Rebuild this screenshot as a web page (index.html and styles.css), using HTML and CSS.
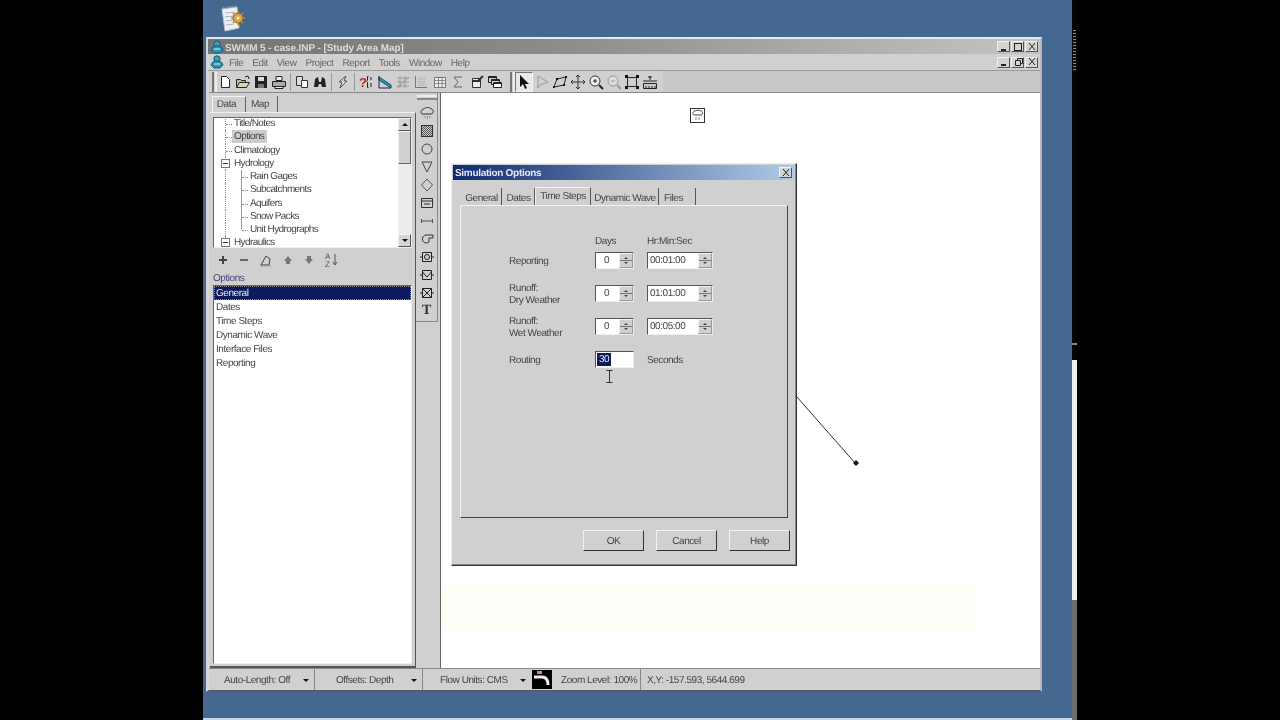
FILE: index.html
```html
<!DOCTYPE html>
<html lang="en">
<head>
    <meta charset="UTF-8" />
    <title>SWMM 5 - case.INP - [Study Area Map]</title>
    <link rel="stylesheet" href="styles.css">
</head>
<body>
    <svg class="defs" width="0" height="0">
        <symbol id="swmm" viewBox="0 0 14 14">
            <circle cx="7" cy="4" r="3.2" fill="#3f9fb5" stroke="#125a78"/>
            <path d="M1 10c1-3 3-4 6-4s5 1 6 4l-3 3H4z" fill="#2f93ad" stroke="#125a78"/>
            <path d="M4 9h6" stroke="#cfeef5"/>
        </symbol>
        <symbol id="cloud" viewBox="0 0 16 16">
            <path d="M3 9C1 8 2 4 5 4c1-2 6-2 7 0 3 0 3 5 0 5z" fill="none" stroke="#333"/>
            <path d="M6 11v2M8.500 11v3M11 11v2" stroke="#888"/>
        </symbol>
    </svg>

    <div class="desktop">
        <svg class="desk-icon" width="26" height="28" viewBox="0 0 26 28">
            <path d="M2 4l15-2 2 21-14 3z" fill="#eef0f4" stroke="#b9c2cf"/>
            <path d="M5 8l10-1M5 12l9-1M6 16l8-1M6 20l8-1" stroke="#aab4c4"/>
            <path d="M3 3l14-2" stroke="#8b96a8" stroke-width="2" stroke-dasharray="1 1"/>
            <circle cx="18" cy="13" r="5" fill="#d9a441" stroke="#7d6230"/>
            <circle cx="18" cy="13" r="1.500" fill="#fff3c8"/>
            <path d="M18 6v3M18 17v3M11 13h3M22 13h3M13 8l2 2M21 16l2 2M23 8l-2 2M15 16l-2 2" stroke="#b98a35" stroke-width="1.500"/>
        </svg>

        <div class="window">
            <div class="titlebar">
                <svg class="app-icon" width="14" height="14"><use href="#swmm"/></svg>
                <span class="title-text">SWMM 5 - case.INP - [Study Area Map]</span>
                <div class="caption-btns">
                    <span class="cap-btn"><svg width="12" height="10"><path d="M3 8h5" stroke="#222" stroke-width="2"/></svg></span>
                    <span class="cap-btn"><svg width="12" height="10"><rect x="2.500" y="1.500" width="7" height="7" fill="none" stroke="#222"/></svg></span>
                    <span class="cap-btn"><svg width="12" height="10"><path d="M3 1l6 7M9 1L3 8" stroke="#222"/></svg></span>
                </div>
            </div>

            <div class="menubar">
                <svg class="app-icon" width="14" height="14"><use href="#swmm"/></svg>
                <div class="menu-items">
                    <span>File</span><span>Edit</span><span>View</span><span>Project</span>
                    <span>Report</span><span>Tools</span><span>Window</span><span>Help</span>
                </div>
                <div class="caption-btns">
                    <span class="cap-btn"><svg width="12" height="10"><path d="M3 8h5" stroke="#222" stroke-width="2"/></svg></span>
                    <span class="cap-btn"><svg width="12" height="10"><path d="M3.500 3.500h5v5h-5zM5.500 3V1.500h5v5H9" fill="none" stroke="#222"/></svg></span>
                    <span class="cap-btn"><svg width="12" height="10"><path d="M3 1l6 7M9 1L3 8" stroke="#222"/></svg></span>
                </div>
            </div>

            <div class="toolbar">
                <span class="grip"></span>
                <div class="tool-group first">
                    <span class="tool"><svg width="16" height="16"><path d="M4.500 2.500h5l3 3v8h-8z" fill="#fff" stroke="#222"/></svg></span>
                    <span class="tool"><svg width="16" height="16"><path d="M1.500 13.500v-8h4l1 1h4v2" fill="#bdbd9c" stroke="#222"/><path d="M1.500 13.500l3-5h10l-3 5z" fill="#d8d8b0" stroke="#222"/><path d="M10 3l3-1 1 3" fill="none" stroke="#222"/></svg></span>
                    <span class="tool"><svg width="16" height="16"><path d="M2 2h12v12H2z" fill="#222"/><path d="M5 3h6v4H5z" fill="#ddd"/><path d="M5 10h6v4H5z" fill="#777"/></svg></span>
                    <span class="tool"><svg width="16" height="16"><path d="M5 2.500h6v4H5z" fill="#eee" stroke="#222"/><path d="M1.500 7.500h13v5h-13z" fill="#aaa" stroke="#222"/><path d="M4 12.500h8v2H4z" fill="#eee" stroke="#222"/></svg></span>
                </div>
                <span class="tool-sep"></span>
                <div class="tool-group">
                    <span class="tool"><svg width="16" height="16"><path d="M2.500 2.500h6v9h-6z" fill="#ddd" stroke="#333"/><path d="M7.500 6.500h6v7h-6z" fill="#fff" stroke="#333"/></svg></span>
                    <span class="tool"><svg width="16" height="16"><path d="M2 13l1-8 3-2 1 5 2 0 1-5 3 2 1 8h-4l-1-3h-2l-1 3z" fill="#222"/></svg></span>
                </div>
                <span class="tool-sep"></span>
                <div class="tool-group">
                    <span class="tool"><svg width="16" height="16"><path d="M11 2L4 8h3l-2 6 7-7H9l2-5z" fill="#ddd" stroke="#555"/></svg></span>
                </div>
                <span class="tool-sep"></span>
                <div class="tool-group wide">
                    <span class="tool"><svg width="16" height="16"><text x="1" y="13" class="svg-q">?</text><path d="M10.500 2.500h-1v4l-1 1 1 1v5h1M13 3v3M13 9v4" fill="none" stroke="#222"/></svg></span>
                    <span class="tool"><svg width="16" height="16"><path d="M2 3l12 8v3L2 6z" fill="#2e9aa8" stroke="#0d4d78"/><path d="M2 2v12h12" fill="none" stroke="#224"/></svg></span>
                    <span class="tool"><svg width="16" height="16"><path d="M2 4h12M2 8h12M2 12h12M5 2v12M10 2v12M2 14l12-11" stroke="#999" fill="none"/></svg></span>
                    <span class="tool"><svg width="16" height="16"><path d="M2.500 2v11.500H14" stroke="#777" fill="none"/><path d="M5 5h7M5 8h7M5 11h7M7 3v9M10 3v9" stroke="#aaa" stroke-dasharray="1 1"/></svg></span>
                    <span class="tool"><svg width="16" height="16"><path d="M2.500 3.500h11v10h-11z" fill="#eee" stroke="#777"/><path d="M2.500 6.500h11M2.500 9.500h11M6.500 4v9M10 4v9" stroke="#888"/></svg></span>
                    <span class="tool"><svg width="16" height="16"><path d="M12 3H4l4 5-4 5h8" fill="none" stroke="#666"/></svg></span>
                    <span class="tool"><svg width="16" height="16"><path d="M3.500 4.500h8v9h-8z" fill="#eee" stroke="#333"/><path d="M3.500 7h8" stroke="#333" stroke-width="2"/><path d="M9 7l5-5" stroke="#333" stroke-width="2"/></svg></span>
                    <span class="tool"><svg width="16" height="16"><path d="M1.500 2.500h8v6h-8z" fill="#ccc" stroke="#222"/><path d="M4.500 5.500h8v5h-8z" fill="#ddd" stroke="#222"/><path d="M6.500 8.500h8v5h-8z" fill="#fff" stroke="#222"/><path d="M1.500 3.500h8M4.500 6.500h8M6.500 9.500h8" stroke="#222"/></svg></span>
                </div>
                <span class="tool-end"></span>
                <span class="grip"></span>
                <div class="tool-group">
                    <span class="tool pressed"><svg width="16" height="16"><path d="M4 1v12l3-3 2 5 2-1-2-4h4z" fill="#111"/></svg></span>
                    <span class="tool"><svg width="16" height="16"><path d="M4 2v12l2-3 8-3z" fill="none" stroke="#999"/></svg></span>
                    <span class="tool"><svg width="16" height="16"><path d="M2 13l3-8 9-2-2 8z" fill="none" stroke="#222"/><path d="M1 12h2v2H1zM4 4h2v2H4zM13 2h2v2h-2zM11 10h2v2h-2z" fill="#111"/></svg></span>
                    <span class="tool"><svg width="16" height="16"><path d="M8 1v14M1 8h14M6 3l2-2 2 2M6 13l2 2 2-2M3 6L1 8l2 2M13 6l2 2-2 2" fill="none" stroke="#333"/></svg></span>
                    <span class="tool"><svg width="16" height="16"><circle cx="7" cy="7" r="5" fill="#eee" stroke="#333"/><path d="M11 11l4 4" stroke="#222" stroke-width="2"/><path d="M5 7h4M7 5v4" stroke="#222"/></svg></span>
                    <span class="tool"><svg width="16" height="16"><circle cx="7" cy="7" r="5" fill="#ddd" stroke="#999"/><path d="M11 11l4 4" stroke="#999" stroke-width="2"/><path d="M5 7h4" stroke="#999"/></svg></span>
                    <span class="tool"><svg width="16" height="16"><path d="M3.500 3.500h9v9h-9z" fill="none" stroke="#222"/><path d="M1 1h3v3H1zM12 1h3v3h-3zM1 12h3v3H1zM12 12h3v3h-3z" fill="#111"/></svg></span>
                    <span class="tool"><svg width="16" height="16"><path d="M1.500 9.500h13v5h-13z" fill="#ccc" stroke="#222"/><path d="M4 12v2M7 12v2M10 12v2M13 12v2" stroke="#222"/><path d="M1 7h14M8 2v4M6 3h4" stroke="#222"/></svg></span>
                </div>
            </div>

            <div class="main">
                <div class="side-panel">
                    <div class="side-tabs">
                        <span class="side-tab active">Data</span>
                        <span class="side-tab">Map</span>
                    </div>
                    <div class="side-body">
                        <div class="tree">
                            <div class="tree-rows">
                                <div class="node lvl1">Title/Notes</div>
                                <div class="node lvl1"><span class="picked">Options</span></div>
                                <div class="node lvl1">Climatology</div>
                                <div class="node lvl1 open">Hydrology</div>
                                <div class="node lvl2">Rain Gages</div>
                                <div class="node lvl2">Subcatchments</div>
                                <div class="node lvl2">Aquifers</div>
                                <div class="node lvl2">Snow Packs</div>
                                <div class="node lvl2 last">Unit Hydrographs</div>
                                <div class="node lvl1 open">Hydraulics</div>
                            </div>
                            <div class="scrollbar">
                                <span class="sb-btn"><i class="tri-up"></i></span>
                                <span class="sb-thumb"></span>
                                <span class="sb-track"></span>
                                <span class="sb-btn"><i class="tri-down"></i></span>
                            </div>
                        </div>

                        <div class="item-tools">
                            <svg width="12" height="12"><path d="M6 2v8M2 6h8" stroke="#444" stroke-width="2"/></svg>
                            <svg width="12" height="12"><path d="M2 6h8" stroke="#666" stroke-width="2"/></svg>
                            <svg width="14" height="14"><path d="M2 12l5-9 4 3-1 6z" fill="none" stroke="#444"/><path d="M1 13h12" stroke="#888" stroke-dasharray="1 1"/></svg>
                            <svg width="12" height="12"><path d="M6 2l4 5H8v3H4V7H2z" fill="#777"/></svg>
                            <svg width="12" height="12"><path d="M6 10l4-5H8V2H4v3H2z" fill="#777"/></svg>
                            <svg width="16" height="16"><text x="1" y="7" class="svg-sort">A</text><text x="1" y="15" class="svg-sort">Z</text><path d="M11 2v10M9 10l2 3 2-3" fill="none" stroke="#555"/></svg>
                        </div>

                        <div class="list-label">Options</div>
                        <div class="item-list">
                            <div class="list-item selected">General</div>
                            <div class="list-item">Dates</div>
                            <div class="list-item">Time Steps</div>
                            <div class="list-item">Dynamic Wave</div>
                            <div class="list-item">Interface Files</div>
                            <div class="list-item">Reporting</div>
                        </div>
                    </div>
                </div>

                <div class="object-bar">
                    <div class="object-tools">
                        <span class="obar-grip"></span>
                        <svg width="16" height="18"><use href="#cloud"/></svg>
                        <svg width="16" height="18"><defs><pattern id="hatch" width="2" height="2" patternUnits="userSpaceOnUse"><path d="M0 2L2 0" stroke="#333" stroke-width="0.800"/></pattern></defs><rect x="2.500" y="3.500" width="11" height="11" fill="url(#hatch)" stroke="#333"/></svg>
                        <svg width="16" height="18"><circle cx="8" cy="9" r="5" fill="none" stroke="#444"/></svg>
                        <svg width="16" height="18"><path d="M3 4h10l-5 10z" fill="none" stroke="#444"/></svg>
                        <svg width="16" height="18"><path d="M8 3l5.500 6L8 15 2.500 9z" fill="none" stroke="#555"/></svg>
                        <svg width="16" height="18"><path d="M2.500 4.500h11v9h-11zM2 7h12M5 10h6" fill="none" stroke="#333"/></svg>
                        <svg width="16" height="18"><path d="M2.500 7v4M13.500 7v4M2.500 9h11" stroke="#555"/></svg>
                        <svg width="16" height="18"><path d="M14 5H7a4 4 0 1 0 3 7V8h4z" fill="none" stroke="#333"/></svg>
                        <svg width="16" height="18"><path d="M3.500 4.500h9v9h-9zM1 9h2M13 9h2" fill="none" stroke="#222"/><circle cx="8" cy="9" r="2.500" fill="none" stroke="#222"/></svg>
                        <svg width="16" height="18"><path d="M3.500 4.500h9v9h-9zM1 9h2M13 9h2M3.500 6L8 11l4.500-5" fill="none" stroke="#222"/></svg>
                        <svg width="16" height="18"><path d="M3.500 4.500h9v9h-9zM1 9h2M13 9h2M3.500 4.500l9 9M12.500 4.500l-9 9" fill="none" stroke="#222"/></svg>
                        <span class="text-tool">T</span>
                    </div>
                </div>

                <div class="map">
                    <svg class="gage" width="15" height="15"><rect x="0.500" y="0.500" width="14" height="14" fill="#fff" stroke="#333"/><path d="M4 7C2 6 3 3 5 3c1-1 5-1 6 0 2 0 2 4 0 4z" fill="none" stroke="#444"/><path d="M6 9v3M9 9v3" stroke="#888"/></svg>
                    <svg class="link" width="64" height="72"><path d="M1 1l58 66" stroke="#333" fill="none"/><path d="M60 64l3 3-3 3-3-3z" fill="#111"/></svg>
                    <span class="artifact"></span>
                </div>
            </div>

            <div class="statusbar">
                <div class="seg seg-auto">Auto-Length: Off<i class="tri-down"></i></div>
                <div class="seg seg-offs">Offsets: Depth<i class="tri-down"></i></div>
                <div class="seg seg-flow">Flow Units: CMS<i class="tri-down"></i></div>
                <div class="run-state"><svg width="19" height="19"><path d="M2 7h8q6 0 6 8" fill="none" stroke="#eee" stroke-width="3"/><path d="M5 1h5v3H5z" fill="#c88"/></svg></div>
                <div class="seg seg-zoom">Zoom Level: 100%</div>
                <div class="seg seg-xy">X,Y: -157.593, 5644.699</div>
            </div>
        </div>

        <div class="dialog">
            <div class="dlg-title">
                <span class="dlg-title-text">Simulation Options</span>
                <span class="cap-btn"><svg width="12" height="10"><path d="M3 1l6 7M9 1L3 8" stroke="#222"/></svg></span>
            </div>
            <div class="dlg-tabs">
                <span class="dlg-tab t-general">General</span>
                <span class="dlg-tab t-dates">Dates</span>
                <span class="dlg-tab t-steps active">Time Steps</span>
                <span class="dlg-tab t-wave">Dynamic Wave</span>
                <span class="dlg-tab t-files">Files</span>
            </div>
            <div class="dlg-panel">
                <div class="step-head">
                    <span>Days</span>
                    <span>Hr:Min:Sec</span>
                </div>
                <div class="step-grid">
                    <span class="row-label">Reporting</span>
                    <div class="spin-box days"><span class="spin-text">0</span><span class="spin"><i class="tri-up"></i><i class="tri-down"></i></span></div>
                    <div class="spin-box time"><span class="spin-text">00:01:00</span><span class="spin"><i class="tri-up"></i><i class="tri-down"></i></span></div>

                    <span class="row-label">Runoff:<br>Dry Weather</span>
                    <div class="spin-box days"><span class="spin-text">0</span><span class="spin"><i class="tri-up"></i><i class="tri-down"></i></span></div>
                    <div class="spin-box time"><span class="spin-text">01:01:00</span><span class="spin"><i class="tri-up"></i><i class="tri-down"></i></span></div>

                    <span class="row-label">Runoff:<br>Wet Weather</span>
                    <div class="spin-box days"><span class="spin-text">0</span><span class="spin"><i class="tri-up"></i><i class="tri-down"></i></span></div>
                    <div class="spin-box time"><span class="spin-text">00:05:00</span><span class="spin"><i class="tri-up"></i><i class="tri-down"></i></span></div>

                    <span class="row-label">Routing</span>
                    <div class="spin-box routing"><span class="sel-text">30</span></div>
                    <span class="row-label">Seconds</span>
                </div>
                <svg class="ibeam" width="7" height="13"><path d="M0.500 0.500h6M3.500 0.500v12M0.500 12.500h6" stroke="#333" fill="none"/></svg>
            </div>
            <div class="dlg-buttons">
                <span class="dlg-btn">OK</span>
                <span class="dlg-btn">Cancel</span>
                <span class="dlg-btn">Help</span>
            </div>
        </div>
    </div>

    <div class="edge-strip">
        <span class="edge-dark"></span>
        <span class="edge-light"></span>
        <span class="edge-gray"></span>
    </div>
</body>
</html>
```

FILE: styles.css
```css
body {
    margin: 0;
    width: 1280px;
    height: 720px;
    overflow: hidden;
    background-color: #000;
    display: flex;
    padding-left: 203px;
    box-sizing: border-box;
    font-family: "Liberation Sans", Arial, sans-serif;
    font-size: 10px;
    letter-spacing: -0.45px;
    white-space: nowrap;
    text-rendering: geometricPrecision;
    color: #444;
}

.defs {
    position: absolute;
}

.desktop {
    position: relative;
    width: 869px;
    height: 718px;
    background-color: #456890;
    border-bottom: 2px solid #c9d3de;
    filter: blur(0.4px);
}

.desk-icon {
    position: absolute;
    left: 17px;
    top: 5px;
}

.edge-strip {
    width: 5px;
    height: 720px;
    display: flex;
    flex-direction: column;
}

.edge-dark {
    height: 360px;
    background:
        repeating-linear-gradient(#8a8a70 0 1px, #111 1px 3px) 1px 30px / 3px 42px no-repeat,
        linear-gradient(#888, #888) 0 343px / 5px 2px no-repeat,
        #050505;
}

.edge-light {
    height: 240px;
    background-color: #eeeeee;
}

.edge-gray {
    height: 120px;
    background-color: #6e6e6e;
}

/* main window */
.window {
    position: absolute;
    left: 3px;
    top: 37px;
    width: 836px;
    height: 655px;
    box-sizing: border-box;
    display: flex;
    flex-direction: column;
    background-color: #d0d0d0;
    border-top: 2px solid #e6e9ec;
    border-left: 3px solid #d8d8d8;
    border-right: 2px solid #b8b8bc;
    border-bottom: 2px solid #555a66;
}

.titlebar {
    height: 15px;
    display: flex;
    align-items: center;
    background: linear-gradient(to right, #757575, #8a8a8a 40%, #a8a8a8 70%, #c4c4c4);
    margin-left: -1px;
}

.app-icon {
    margin-left: 2px;
    flex: none;
}

.title-text {
    margin-left: 1px;
    padding-top: 3px;
    font-weight: bold;
    font-size: 10px;
    letter-spacing: -0.1px;
    color: #dcdcdc;
}

.caption-btns {
    margin-left: auto;
    display: flex;
    gap: 1px;
    margin-right: 2px;
}

.cap-btn {
    width: 13px;
    height: 11px;
    box-sizing: border-box;
    display: flex;
    align-items: center;
    justify-content: center;
    background-color: #d4d4d4;
    border: 1px solid;
    border-color: #f2f2f2 #555 #555 #f2f2f2;
}

.menubar {
    height: 17px;
    display: flex;
    align-items: center;
    border-bottom: 1px solid #999;
    box-sizing: border-box;
    margin-left: -1px;
}

.menu-items {
    display: flex;
    gap: 9px;
    margin-left: 5px;
    padding-top: 2px;
    color: #666;
}

.toolbar {
    height: 22px;
    display: flex;
    align-items: center;
    box-sizing: border-box;
    border-bottom: 1px solid #888;
    padding-left: 3px;
    background: linear-gradient(to right, #d0d0d0 454px, #c8c8c8 454px);
}

.grip {
    width: 5px;
    height: 20px;
    flex: none;
    box-sizing: border-box;
    border-left: 2px solid #777;
    border-right: 2px solid #eee;
}

.tool-group {
    display: flex;
}

.tool-group.first {
    margin-left: -1px;
}

.tool-group.wide .tool {
    width: 18.4px;
}

.tool {
    width: 18px;
    height: 20px;
    display: flex;
    align-items: center;
    justify-content: center;
    box-sizing: border-box;
}

.tool.pressed {
    background-color: #e8e8e8;
    border: 1px solid;
    border-color: #777 #f4f4f4 #f4f4f4 #777;
}

.tool-sep {
    width: 1px;
    height: 18px;
    margin: 0 2px;
    background-color: #999;
    flex: none;
}

.tool-end {
    width: 6px;
    flex: none;
}

.svg-q {
    font: bold 13px "Liberation Sans", sans-serif;
    fill: #c22;
}

.svg-sort {
    font: 8px "Liberation Sans", sans-serif;
    fill: #555;
}

.main {
    flex: 1;
    display: flex;
    min-height: 0;
}

/* left browser panel */
.side-panel {
    width: 207px;
    box-sizing: border-box;
    padding-top: 3px;
    display: flex;
    flex-direction: column;
    flex: none;
}

.side-tabs {
    height: 16px;
    display: flex;
    padding-left: 3px;
}

.side-tab {
    width: 32px;
    padding-right: 3px;
    text-align: center;
    line-height: 18px;
    border-right: 1px solid #666;
    box-sizing: border-box;
}

.side-tab.active {
    width: 34px;
    padding-right: 5px;
    border-top: 1px solid #f4f4f4;
    border-left: 1px solid #f4f4f4;
    line-height: 15px;
}

.side-body {
    flex: 1;
    min-height: 0;
    padding: 4px 3px 2px 3px;
    margin-left: 1px;
    border-top: 1px solid #f0f0f0;
    border-right: 1px solid #555;
    border-bottom: 2px solid #555;
    display: flex;
    flex-direction: column;
}

.tree {
    height: 131px;
    flex: none;
    box-sizing: border-box;
    display: flex;
    overflow: hidden;
    background-color: #fff;
    border: 1px solid;
    border-color: #666 #eee #eee #666;
}

.tree-rows {
    flex: 1;
    margin-top: -1px;
    letter-spacing: -0.6px;
}

.node {
    position: relative;
    height: 13.25px;
    line-height: 13px;
}

.lvl1 {
    padding-left: 20px;
}

.lvl2 {
    padding-left: 36px;
    background: linear-gradient(#999, #999) 27px 0 / 1px 100% no-repeat;
}

.lvl2.last {
    background-size: 1px 50%;
}

.node::before {
    content: "";
    position: absolute;
    left: 11px;
    top: 0;
    bottom: 0;
    border-left: 1px dotted #888;
}

.lvl1::after {
    content: "";
    position: absolute;
    left: 12px;
    top: 7px;
    width: 6px;
    border-top: 1px dotted #888;
}

.lvl2::after {
    content: "";
    position: absolute;
    left: 28px;
    top: 7px;
    width: 6px;
    height: 0;
    border-top: 1px dotted #888;
}

.open::after {
    left: 7px;
    top: 2px;
    width: 7px;
    height: 7px;
    border: 1px solid #777;
    background: linear-gradient(#333, #333) center / 5px 1px no-repeat #fff;
}

.picked {
    display: inline-block;
    padding: 0 2px;
    margin-left: -2px;
    width: 35px;
    box-sizing: border-box;
    background-color: #cccccc;
}

.scrollbar {
    width: 13px;
    flex: none;
    display: flex;
    flex-direction: column;
    background-color: #ececec;
}

.sb-btn {
    height: 13px;
    box-sizing: border-box;
    display: flex;
    align-items: center;
    justify-content: center;
    background-color: #d4d4d4;
    border: 1px solid;
    border-color: #f2f2f2 #555 #555 #f2f2f2;
    flex: none;
}

.sb-thumb {
    height: 33px;
    box-sizing: border-box;
    background-color: #d0d0d0;
    border: 1px solid;
    border-color: #f2f2f2 #666 #666 #f2f2f2;
    flex: none;
}

.sb-track {
    flex: 1;
}

.tri-up,
.tri-down {
    display: block;
    width: 0;
    height: 0;
    border-left: 3px solid transparent;
    border-right: 3px solid transparent;
}

.tri-up {
    border-bottom: 3px solid #111;
}

.tri-down {
    border-top: 3px solid #111;
}

.item-tools {
    height: 23px;
    flex: none;
    box-sizing: border-box;
    padding-left: 4px;
    display: flex;
    align-items: center;
    gap: 9px;
}

.list-label {
    height: 14px;
    line-height: 15px;
    color: #45457d;
    flex: none;
}

.item-list {
    flex: 1;
    box-sizing: border-box;
    background-color: #fff;
    border: 1px solid;
    border-color: #666 #eee #eee #666;
}

.list-item {
    height: 14px;
    line-height: 15px;
    padding-left: 2px;
}

.list-item.selected {
    background-color: #0b1b5e;
    color: #e8e8f0;
    outline: 1px dotted #888;
    outline-offset: -1px;
}

/* object toolbar */
.object-bar {
    width: 24px;
    flex: none;
}

.object-tools {
    height: 229px;
    width: 22px;
    box-sizing: border-box;
    border-right: 1px solid #888;
    border-bottom: 1px solid #888;
    display: flex;
    flex-direction: column;
    align-items: center;
    padding-top: 2px;
}

.object-tools svg {
    flex: none;
    display: block;
}

.obar-grip {
    flex: none;
    width: 20px;
    height: 5px;
    margin-bottom: 4px;
    box-sizing: border-box;
    border-top: 2px solid #eee;
    border-bottom: 2px solid #888;
}

.text-tool {
    flex: none;
    font-family: "Liberation Serif", serif;
    font-weight: bold;
    font-size: 14px;
    line-height: 18px;
    color: #333;
}

/* map */
.map {
    position: relative;
    flex: 1;
    background-color: #fff;
    border-left: 1px solid #666;
}

.gage {
    position: absolute;
    left: 249px;
    top: 15px;
}

.link {
    position: absolute;
    left: 355px;
    top: 303px;
}

.artifact {
    position: absolute;
    left: 0;
    top: 488px;
    width: 535px;
    height: 50px;
    background-color: #fffffa;
}

/* status bar */
.statusbar {
    height: 22px;
    flex: none;
    display: flex;
    align-items: center;
    border-top: 1px solid #8a8a8a;
    box-sizing: border-box;
    background-color: #d0d0d0;
}

.seg {
    height: 100%;
    box-sizing: border-box;
    display: flex;
    align-items: center;
    border-right: 1px solid #888;
    line-height: 15px;
}

.seg .tri-down {
    margin-left: auto;
}

.seg-auto {
    width: 106px;
    padding: 2px 5px 0 15px;
}

.seg-offs {
    width: 108px;
    padding: 2px 5px 0 21px;
}

.seg-flow {
    width: 108px;
    padding: 2px 5px 0 17px;
    border-right: none;
}

.run-state {
    width: 20px;
    height: 19px;
    background-color: #000;
    flex: none;
    margin-left: 1px;
}

.seg-zoom {
    width: 89px;
    padding: 2px 0 0 9px;
}

.seg-xy {
    flex: 1;
    padding: 2px 0 0 6px;
    border-right: none;
}

/* dialog */
.dialog {
    position: absolute;
    left: 248px;
    top: 163px;
    width: 346px;
    height: 403px;
    box-sizing: border-box;
    padding: 1px;
    background-color: #d0d0d0;
    border: 1px solid;
    border-color: #eeeeee #333 #333 #eeeeee;
    box-shadow: inset -1px -1px 0 #888;
    display: flex;
    flex-direction: column;
}

.dlg-title {
    height: 15px;
    flex: none;
    display: flex;
    align-items: center;
    justify-content: space-between;
    padding: 0 3px 0 2px;
    font-weight: bold;
    letter-spacing: -0.3px;
    color: #e4e8f0;
    background: linear-gradient(to right, #0d2a6e, #6f8db8 60%, #b0cbe8);
}

.dlg-title-text {
    padding-top: 2px;
}

.dlg-tabs {
    height: 18px;
    flex: none;
    display: flex;
    align-items: flex-end;
    margin-top: 7px;
    padding-left: 12px;
}

.dlg-tab {
    height: 17px;
    line-height: 21px;
    text-align: center;
    box-sizing: border-box;
    border-right: 1px solid #555;
    margin-right: 1px;
}

.t-general {
    width: 37px;
    padding-right: 3px;
}

.t-dates {
    width: 32px;
}

.t-steps {
    width: 56px;
}

.t-wave {
    width: 67px;
}

.t-files {
    width: 36px;
    padding-right: 8px;
}

.dlg-tab.active {
    height: 19px;
    line-height: 18px;
    border-top: 1px solid #f2f2f2;
    border-left: 1px solid #f2f2f2;
    margin-left: -1px;
    background-color: #d0d0d0;
    position: relative;
    top: 1px;
}

.dlg-panel {
    position: relative;
    height: 313px;
    flex: none;
    margin: 0 7px;
    box-sizing: border-box;
    padding: 28px 0 0 48px;
    border: 1px solid;
    border-color: #f2f2f2 #444 #444 #f2f2f2;
}

.step-head {
    display: grid;
    grid-template-columns: 52px 66px;
    height: 12px;
    line-height: 15px;
    margin: 0 0 6px 86px;
}

.step-grid {
    display: grid;
    grid-template-columns: 86px 52px 66px;
    grid-template-rows: repeat(4, 17px);
    row-gap: 16px;
    align-items: center;
}

.row-label {
    padding-top: 3px;
    line-height: 12px;
}

.spin-box {
    height: 17px;
    box-sizing: border-box;
    display: flex;
    align-items: center;
    background-color: #fff;
    border: 1px solid;
    border-color: #555 #eee #eee #555;
}

.spin-box.days,
.spin-box.routing {
    width: 39px;
}

.spin-box.time {
    width: 66px;
}

.spin-text {
    flex: 1;
    padding-left: 2px;
}

.days .spin-text {
    padding-left: 8px;
}

.sel-text {
    margin-left: 1px;
    padding: 0 2px;
    line-height: 13px;
    background-color: #0b1b5e;
    color: #e8e8f0;
}

.spin {
    width: 14px;
    height: 15px;
    flex: none;
    background: linear-gradient(#777, #777) center / 100% 1px no-repeat #d0d0d0;
    display: flex;
    flex-direction: column;
    align-items: center;
    justify-content: space-around;
    box-sizing: border-box;
    padding: 1px 0;
    border: 1px solid;
    border-color: #f2f2f2 #999 #999 #f2f2f2;
}

.spin .tri-up,
.spin .tri-down {
    border-left-width: 2.5px;
    border-right-width: 2.5px;
}

.spin .tri-up {
    border-bottom: 2px solid #444;
}

.spin .tri-down {
    border-top: 2px solid #444;
}

.ibeam {
    position: absolute;
    left: 145px;
    top: 164px;
}

.dlg-buttons {
    display: flex;
    justify-content: flex-end;
    gap: 12px;
    padding: 12px 5px 0 0;
}

.dlg-btn {
    width: 61px;
    height: 21px;
    line-height: 21px;
    text-align: center;
    box-sizing: border-box;
    border: 1px solid;
    border-color: #f2f2f2 #333 #333 #f2f2f2;
}
```
